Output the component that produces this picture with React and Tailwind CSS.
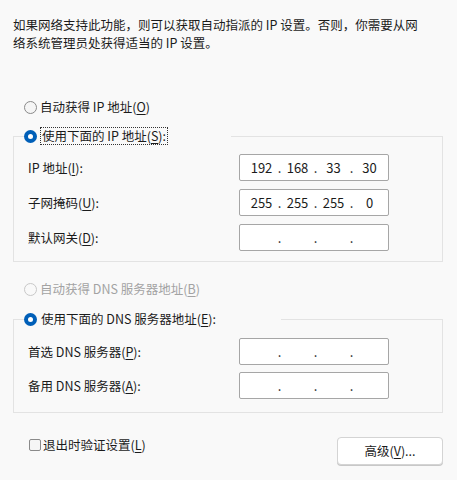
import React from "react";

const font = "font-['Segoe_UI','Noto_Sans_CJK_SC',sans-serif]";

function Radio({ checked, disabled }) {
  if (checked) {
    return (
      <span className="flex h-[13px] w-[13px] shrink-0 items-center justify-center rounded-full bg-[#005fb8]">
        <span className="h-[5px] w-[5px] rounded-full bg-white" />
      </span>
    );
  }
  return (
    <span
      className={`h-[13px] w-[13px] shrink-0 rounded-full border ${
        disabled ? "border-[#c8c8c8] bg-[#f9f9f9]" : "border-[#8a8a8a] bg-[#f5f5f5]"
      }`}
    />
  );
}

// label text with an underlined access key, e.g. "自动获得 IP 地址(", "O", ")"
function Key({ before, k, after }) {
  return (
    <span>
      {before}
      <span className="underline underline-offset-2">{k}</span>
      {after}
    </span>
  );
}

function IpBox({ parts }) {
  return (
    <div className="flex h-[27px] w-[150px] items-center rounded-[2px] border border-[#a6a6a6] bg-white pl-[7px] text-[13px] text-[#1b1b1b]">
      {parts.map((p, i) => (
        <React.Fragment key={i}>
          <span className="w-[29px] text-center">{p}</span>
          {i < 3 && <span className="w-[7px] text-center">.</span>}
        </React.Fragment>
      ))}
    </div>
  );
}

function Row({ label, parts }) {
  return (
    <div className="flex items-center">
      <div className="w-[211px]">{label}</div>
      <IpBox parts={parts} />
    </div>
  );
}

export default function App() {
  const empty = ["", "", "", ""];
  return (
    <div
      className={`h-[480px] w-[457px] overflow-hidden bg-[#f9f9f9] pl-[13px] pr-[14px] pt-[16px] text-[12.5px] leading-[18px] text-[#1b1b1b] ${font}`}
    >
      <p>
        如果网络支持此功能，则可以获取自动指派的 IP 设置。否则，你需要从网
        <br />
        络系统管理员处获得适当的 IP 设置。
      </p>

      {/* automatic IP */}
      <div className="ml-[11px] mt-[45px] flex h-[20px] items-center gap-[3px]">
        <Radio />
        <Key before="自动获得 IP 地址(" k="O" after=")" />
      </div>

      {/* manual IP group */}
      <fieldset className="mt-[9px] border border-[#e3e3e3] px-[14px] pb-[10px] pt-[8px]">
        <legend className="ml-[-4px] w-[207px]">
          <div className="flex h-[20px] items-center gap-[3px]">
            <Radio checked />
            <span className="border border-dotted border-[#333] px-[1px] leading-[16px]">
              <Key before="使用下面的 IP 地址(" k="S" after="):" />
            </span>
          </div>
        </legend>
        <div className="flex flex-col gap-[8px]">
          <Row label={<Key before="IP 地址(" k="I" after="):" />} parts={["192", "168", "33", "30"]} />
          <Row label={<Key before="子网掩码(" k="U" after="):" />} parts={["255", "255", "255", "0"]} />
          <Row label={<Key before="默认网关(" k="D" after="):" />} parts={empty} />
        </div>
      </fieldset>

      {/* automatic DNS (disabled) */}
      <div className="ml-[11px] mt-[17px] flex h-[20px] items-center gap-[3px] text-[#a3a3a3]">
        <Radio disabled />
        <Key before="自动获得 DNS 服务器地址(" k="B" after=")" />
      </div>

      {/* manual DNS group */}
      <fieldset className="mt-[10px] border border-[#e3e3e3] px-[14px] pb-[13px] pt-[9px]">
        <legend className="ml-[-4px] w-[257px]">
          <div className="flex h-[20px] items-center gap-[4px]">
            <Radio checked />
            <Key before="使用下面的 DNS 服务器地址(" k="E" after="):" />
          </div>
        </legend>
        <div className="flex flex-col gap-[7px]">
          <Row label={<Key before="首选 DNS 服务器(" k="P" after="):" />} parts={empty} />
          <Row label={<Key before="备用 DNS 服务器(" k="A" after="):" />} parts={empty} />
        </div>
      </fieldset>

      {/* footer */}
      <div className="mt-[22px] flex items-start justify-between">
        <div className="ml-[16px] flex h-[20px] items-center gap-[2px]">
          <span className="h-[12px] w-[12px] rounded-[2px] border border-[#8a8a8a] bg-[#f5f5f5]" />
          <Key before="退出时验证设置(" k="L" after=")" />
        </div>
        <button className="mt-[2px] h-[28px] w-[106px] rounded-[4px] border border-[#d4d4d4] bg-white text-[12.5px] text-[#1b1b1b] shadow-[0_1px_0_#c8c8c8]">
          <Key before="高级(" k="V" after=")..." />
        </button>
      </div>
    </div>
  );
}
